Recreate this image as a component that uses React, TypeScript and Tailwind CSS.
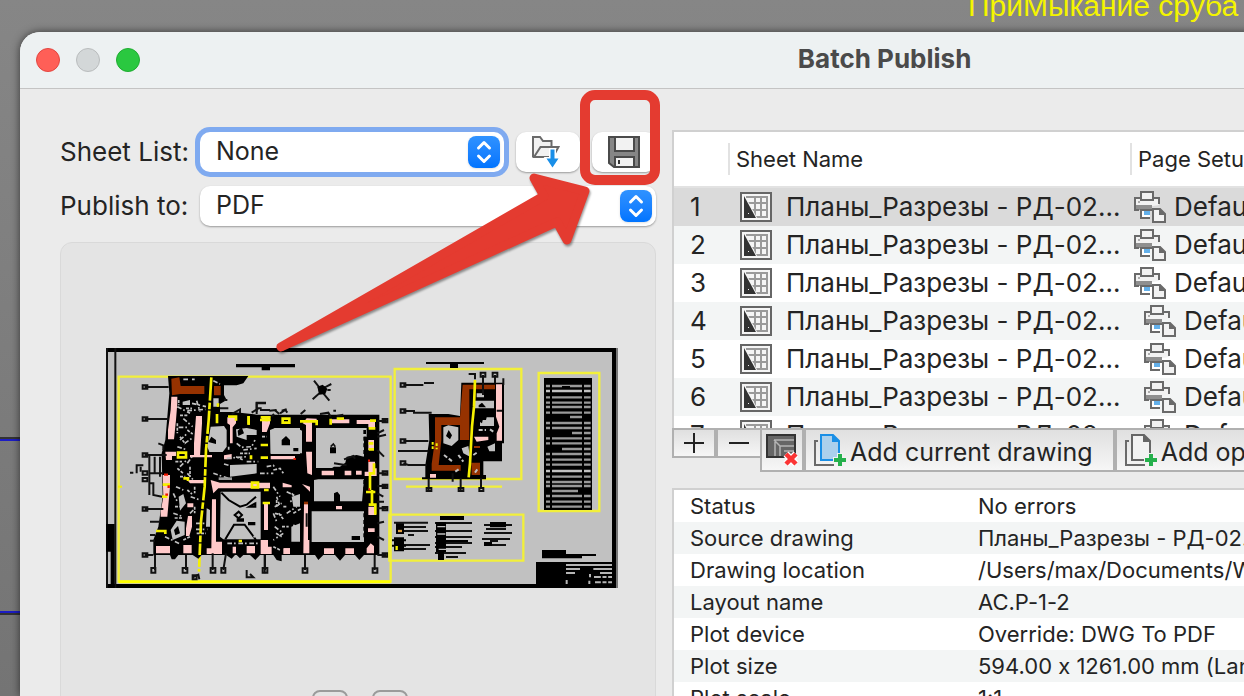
import React from "react";
import clsx from "clsx";

type Sheet = { id: number; nested?: boolean };

const sheets: Sheet[] = [
  { id: 1 },
  { id: 2 },
  { id: 3 },
  { id: 4, nested: true },
  { id: 5, nested: true },
  { id: 6, nested: true },
  { id: 7, nested: true },
];

const details = [
  ["Status", "No errors"],
  ["Source drawing", "Планы_Разрезы - РД-02.dwg"],
  ["Drawing location", "/Users/max/Documents/Work"],
  ["Layout name", "АС.Р-1-2"],
  ["Plot device", "Override: DWG To PDF"],
  ["Plot size", "594.00 x 1261.00 mm (Landscape)"],
  ["Plot scale", "1:1"],
];

function Stepper() {
  return (
    <span className="pointer-events-none absolute inset-y-0 right-1 my-auto flex h-8 w-8 items-center justify-center rounded-lg bg-linear-to-b from-[#2f92ff] to-[#0074ff] shadow-sm">
      <svg width="16" height="24" viewBox="0 0 16 24" fill="none" stroke="white" strokeWidth="3" strokeLinecap="round" strokeLinejoin="round">
        <path d="M2.5 8 8 2.5 13.5 8M2.5 16 8 21.5 13.5 16" />
      </svg>
    </span>
  );
}

function OpenFolderIcon() {
  return (
    <svg width="28" height="32" viewBox="0 0 28 32">
      <path d="M1 21V1H8L11 5H19.5V11" fill="#f2f2f2" stroke="#6a6a6a" strokeWidth="2" />
      <path d="M2 21 8.5 11H26.5L21 21Z" fill="#f2f2f2" stroke="#6a6a6a" strokeWidth="2" />
      <path d="M18.5 13.5H22.5V22.5H26.5L20.5 31.5 14.5 22.5H18.5Z" fill="#1a8fe8" stroke="white" strokeWidth="3" paintOrder="stroke" />
    </svg>
  );
}

function FloppyIcon() {
  return (
    <svg width="32" height="32" viewBox="0 0 32 32" strokeWidth="2">
      <path d="M1 1H31V31H6L1 27Z" fill="#868686" stroke="#4a4a4a" />
      <path d="M7 1V15H26V1Z" fill="#f2f2f2" stroke="#4a4a4a" />
      <path d="M7 31V21H26V31Z" fill="#f2f2f2" stroke="#4a4a4a" />
      <path d="M10 24H12V28H10Z" fill="#333" />
    </svg>
  );
}

function SheetIcon() {
  return (
    <svg width="32" height="30" viewBox="0 0 32 30" className="shrink-0">
      <path d="M1 1H31V29H1Z" fill="#f5f5f5" stroke="#666" strokeWidth="2" />
      <path d="M6 5H28M8 11H28M11 18H28M14 25H28M15 4V26M21 4V26M27 4V26" stroke="#9a9a9a" strokeWidth="2" />
      <path d="M4 4V26H16Z" fill="#333" stroke="#f5f5f5" strokeWidth="2" paintOrder="stroke" />
      <path d="M8 21h1v1H8Z" fill="#eee" />
    </svg>
  );
}

function PrinterIcon() {
  return (
    <svg width="32" height="32" viewBox="0 0 32 32" className="shrink-0">
      <path d="M1 18V7H25V14" fill="#f2f2f2" />
      <path d="M0 14H18V19H0Z" fill="#8f8f8f" />
      <path d="M5 19H1V7H25V13" fill="none" stroke="#6a6a6a" strokeWidth="2" />
      <path d="M4 11H6" stroke="#6a6a6a" strokeWidth="1" />
      <path d="M7 1H19V9H7Z" fill="#f2f2f2" stroke="#6a6a6a" strokeWidth="2" />
      <path d="M7 19H16V27H7Z" fill="white" />
      <path d="M16 27H7V19H18" fill="none" stroke="#6a6a6a" strokeWidth="2" />
      <path d="M10 20H16V24H10Z" fill="#63b0ea" />
      <path d="M19 18H26L31 23V31H19Z" fill="#f2f2f2" stroke="#6a6a6a" strokeWidth="2" />
      <path d="M25 17 32 24H25Z" fill="#6a6a6a" />
    </svg>
  );
}

function RemoveLayoutIcon() {
  return (
    <svg width="32" height="32" viewBox="0 0 32 32">
      <path d="M1 1H29V23H1Z" fill="#666" stroke="#333" strokeWidth="2" />
      <path d="M8 6H28M8 6 14 12H28M14 12V22M9 8V22M18 17H28" fill="none" stroke="#b5b5b5" strokeWidth="1.5" />
      <path d="M20 20 30 30M30 20 20 30" stroke="white" strokeWidth="7" />
      <path d="M20 20 30 30M30 20 20 30" stroke="#fb3434" strokeWidth="4.5" />
    </svg>
  );
}

function AddPageIcon({ current }: { current?: boolean }) {
  const line = current ? "#1a8fe6" : "#666";
  return (
    <svg width="32" height="32" viewBox="0 0 32 32">
      <path d="M4 7H1V31H20" fill="none" stroke="#6a6a6a" strokeWidth="2" />
      <path d="M7 1H19L25 7V26H7Z" fill={current ? "#abd0ec" : "#f2f2f2"} stroke={line} strokeWidth="2" />
      <path d="M18 0 26 8H18Z" fill={line} />
      <path d="M24 20H28V24H32V28H28V32H24V28H20V24H24Z" fill="#25b04c" stroke="#f2f2f2" strokeWidth="2" paintOrder="stroke" />
    </svg>
  );
}

// Thumbnail of the plotted layout, three units to a pixel
function DrawingPreview() {
  return (
    <svg viewBox="18 24 1536 720" className="w-full" fill="none" role="img" aria-label="Layout preview">
      <path d="M18 24H1554V744H18Z" fill="#c1c1c1" />
      <path d="M18 30H1554M18 738H1554M1542 24V744" stroke="#000" strokeWidth="12" />
      <path d="M1551 24V744" stroke="#777" strokeWidth="6" />
      <path d="M21 24V744M46 24V744" stroke="#111" strokeWidth="6" />
      <path d="M18 552H44V635H18ZM32 635H44V744H32Z" fill="#000" />

      {/* left plan */}
      <g>
        <path d="M56 110H872V725H56Z" stroke="#f2f03a" strokeWidth="7" />
        <path d="M56 725H872" stroke="#ffff00" strokeWidth="9" />
        <path d="M408 77H585M485 86H510" stroke="#000" strokeWidth="10" />
        <path d="M204 108H445L430 130 410 136H372V165L380 180 360 192V216H400L470 224H838V645H160V600L175 560 188 470 185 340 196 300 208 160Z" fill="#000" />
        <path d="M214 116 238 112 242 138H313V162H240L216 166ZM342 138H362V166H342Z" fill="#963200" />
        <path d="M214 170H232V190L228 240 222 298H204V270L212 210ZM288 228H306V250L300 348H282V310ZM196 335H228V348H216V360H198ZM188 405H210V440L202 530H182V515L190 470ZM336 478H348V605H366V642H320V625H334ZM492 490H504V570H492ZM486 232H510V250L500 276H486ZM382 232H408V250L398 262V310H390V255L382 250ZM332 420 360 428H510V445H355L340 460ZM548 428 575 436V442H548ZM168 618H210V640H168ZM250 615H275V640H250ZM398 620H408V640H398ZM440 618H465V640H440ZM482 600H504V620H515V642H482ZM552 625H570V642H552ZM262 420H315V430H270ZM372 346 395 342V358H372ZM512 348H585V358H512ZM262 490H280V502H262ZM264 528H276V560L268 588H258V565ZM270 345H336V352H270Z" fill="#ffc9c9" />
        <path d="M332 260 372 258 380 270V320L368 336H328L322 320ZM408 268 440 264 470 270V285H440V300L410 290ZM510 270 525 264H600V342H512ZM362 455H482V598H370L360 590ZM230 542 254 545V585L218 600 212 570ZM390 375 470 372V400L390 410ZM236 470 250 462 258 490 240 512ZM320 505 330 510V560H318ZM340 175H356V200H340ZM248 185 270 180V195H248ZM575 470 600 462V500H580ZM574 560 600 550V605H574Z" fill="#c1c1c1" />
        <path d="M325 306 334 290 348 300V312ZM413 272 425 262 432 280 415 288ZM546 300 558 290 570 300V316H546ZM568 324H594V334H568ZM410 535H432V545H410ZM444 546H466V556H444ZM222 570 234 558 240 580 226 586Z" fill="#000" />
        <path d="M364 458 386 480 420 500 440 494 468 470M376 598 402 554H434L468 600M404 525 416 515 426 525 416 535ZM448 500 466 490V500Z" stroke="#000" strokeWidth="6" />
        <path d="M232 200 270 220M250 236 278 260M236 262H262M254 310 280 292M240 300 262 280M232 320 262 330M276 190 318 200M290 182 300 215M340 400 400 420M372 372 420 385M410 310 425 322 455 320 465 300M430 330 470 325M500 380 520 376 530 390M520 440 540 470M524 500 545 490M520 520 530 545M524 560 550 580 520 600M560 455 590 470 565 490M560 520 590 500M228 440 250 450M220 460 232 485M262 400 280 420M272 470 300 480M288 550H322M288 568H322M220 520 250 530M195 590 240 612M270 520 280 510M440 590H480M382 610H480M250 118H270M276 118H284M340 122 360 132M262 212 316 208M240 380 260 360M262 370 276 350M380 355 440 350M440 365H475M480 400H520" stroke="#c1c1c1" strokeWidth="5" strokeDasharray="14 6 5 8" />
        <path d="M236 180V196M258 205H276M240 226H266M232 250V280M262 270 278 282M240 290 256 312M226 365H246M232 385 250 400M240 410H256M270 380V410M284 440V460M225 500H245M262 450 276 462M284 500V520M290 580H318M224 534H246M250 600 270 590M386 320V330M420 340H450M408 350 430 360M486 290H500M530 480V500M550 500H562M536 520 552 540M546 560H566M520 620 540 630" stroke="#c1c1c1" strokeWidth="5" strokeDasharray="9 4" />
        <path d="M356 416H396" stroke="#999" strokeWidth="8" />
        <path d="M334 112 326 240 318 330 314 440 303 545 297 695" stroke="#f5f000" strokeWidth="8" strokeDasharray="70 6 20 4" />
        <path d="M351 222V250M384 230H408V242M446 228V254M482 232H512M482 315H504M482 353H504M453 346V358M234 338H258V352H234ZM456 428H474V442H456ZM488 489H510M492 450H506M188 434H210M186 470H202M168 573H196V582M250 415H264V423M416 603H426M354 190V200M548 236H568V248H548ZM500 228V244" stroke="#f5f000" strokeWidth="8" />
        <path d="M192 404H204M196 464H204M584 354V360M206 436V444" stroke="#f01800" strokeWidth="7" />
        <path d="M134 141H206M134 237H206M134 345H200M134 507H190M134 645H160M148 345V465M164 350V400M180 350V410M146 400H186M146 430H160V465L186 470M150 585H165M150 602H165M175 310 190 316V330M150 545H180M165 645V690M258 645V690M338 640V690M378 640 370 690M494 645V700M360 205H385M395 222 420 208V220M455 218 475 205H485M470 215V188H498M508 212 530 210M540 220 556 210 562 218M515 230 522 222M372 180H382M90 398H100M110 400V376H130M122 380V395M278 712 295 704 298 718M440 690V712H460L450 702" stroke="#111" strokeWidth="6" />
        <path d="M128 136H142V146H128ZM128 232H142V242H128ZM128 340H142V350H128ZM128 394H142V404H128ZM128 414H142V424H128ZM128 502H142V512H128ZM128 640H142V650H128ZM154 684H166V698H154ZM248 684H262V698H248ZM332 684H346V698H332ZM364 684H376V698H364ZM488 684H502V698H488ZM278 706H290V718H278Z" stroke="#111" strokeWidth="6" />
        <path d="M210 645H235L225 658H215ZM278 645H305L295 656ZM378 645H405L395 656ZM410 645H430L420 655ZM450 645H480L466 660ZM520 645 530 660 545 664V645Z" fill="#000" />
        <path d="M54 440H66" stroke="#f5f000" strokeWidth="6" />
      </g>

      {/* right half of the left plan */}
      <g transform="translate(420 0)">
        <path d="M228 264H380V290H372V350L350 345 320 350 316 368 300 380H282L276 384H228V330ZM92 275 105 264H170L186 272V340H92ZM222 420 235 418H372L366 486H222ZM215 514H372V606H215ZM226 560H372V604H226Z" fill="#c1c1c1" />
        <path d="M222 390H380V410H222ZM160 324H175V334H160ZM125 300 138 288 150 300V316H125ZM336 360H360V372H336ZM335 588H360V600H335ZM270 322H288V340H270ZM282 486V460L292 455 300 465V486Z" fill="#000" />
        <path d="M272 320 280 312 286 320" stroke="#111" strokeWidth="5" />
        <path d="M212 488H380M212 508H380" stroke="#000" strokeWidth="9" />
        <path d="M200 235 230 236V246H216V305H198V255L188 250ZM198 335H216V405L202 400ZM245 392H282V406H245ZM314 392H334V406H314ZM350 240H405V262H385V252H350ZM385 300H402V330H385ZM385 365H405V385H410V408H374V395H385ZM385 500H408V525H385ZM192 490H204V600H208V640H190ZM186 432 210 440V455ZM272 238H328V250H272ZM288 498H306V508H288ZM384 565H404V576H384ZM392 610 402 618V640H380V625ZM252 625H282V642H252ZM316 625H342V642H316ZM348 392H365V404H348ZM130 625H150V642H130Z" fill="#ffc9c9" />
        <path d="M26 228V254M180 244H230V256M272 236V254M290 236H312M390 242H408M386 265H406M386 328H402M402 370V400H390V450M378 456H406M396 450V495M386 494H406V524M386 310H400M60 240H92" stroke="#f5f000" strokeWidth="8" />
        <path d="M384 362H390M386 448H390" stroke="#f01800" strokeWidth="7" />
        <path d="M192 489H204" stroke="#963200" strokeWidth="8" />
        <path d="M222 122 236 140 255 142 274 132M236 140 240 158 218 178M255 145 250 160 268 182M262 150H272" stroke="#111" strokeWidth="6" />
        <path d="M232 140 248 134 262 146 256 162 238 164Z" fill="#000" />
        <path d="M182 222 196 210M240 222 265 218 272 230M280 212H288M290 228 310 224M412 243H440M412 280 432 270M412 290 438 284M412 330 432 350M412 400H440M412 438H440M412 460 430 470M412 485H432M412 505H440M412 550 432 545M412 590 432 600M412 645H440M404 645V690M195 645V690M75 645V690M282 370 320 376M312 358 340 348 345 356M50 222V190H78M60 210H90M104 210 118 222M125 212 140 208M200 520V560" stroke="#111" strokeWidth="6" />
        <path d="M428 237H442V247H428ZM428 394H442V404H428ZM428 434H442V444H428ZM428 501H442V511H428ZM428 640H442V650H428ZM398 685H412V698H398ZM188 685H202V698H188Z" stroke="#111" strokeWidth="6" />
        <path d="M374 270V360M374 420V480M374 520V600" stroke="#000" strokeWidth="8" strokeDasharray="12 8" />
        <path d="M100 390 120 385 130 400M110 470 120 500M105 520 125 525M155 460 175 480 160 490M160 520 185 505M108 580 125 590M160 555 175 565" stroke="#c1c1c1" strokeWidth="5" strokeDasharray="10 6" />
        <path d="M225 645H250L235 660ZM285 645H315L300 662ZM345 645H372L358 660Z" fill="#000" />
      </g>

      <g transform="translate(840 0)">
        {/* upper floor */}
        <path d="M44 87H424V417H44ZM28 524H430V662H28ZM476 99H658V513H476ZM78 440H366" stroke="#f2f03a" strokeWidth="7" />
        <path d="M138 69H312" stroke="#000" strokeWidth="6" />
        <path d="M210 69H234V84H210Z" fill="#000" />
        <path d="M244 128H372V310H366V364H310V405H318V418H126V412H136V375L148 300 146 222H205L240 228Z" fill="#000" />
        <path d="M248 134H345V148H268V300H240V255H184V300L176 375H242V392H155V372L165 300V232H240ZM274 368H300V405H275ZM282 318H300V324H282Z" fill="#963200" />
        <path d="M190 262 205 256 235 262V300L215 318 190 310ZM282 182H342V205H282ZM320 232H342V258H300V240H318ZM290 160H312V172H290ZM245 325 265 318 270 350 250 340ZM322 320 345 310V334H328Z" fill="#c1c1c1" />
        <path d="M348 133H366V302H350V280L358 260 348 230ZM282 290H325V300L290 305ZM150 402H168V413H150Z" fill="#ffc9c9" />
        <path d="M198 288 206 270 216 286 210 298ZM296 196 306 188 318 202H296ZM290 240 310 232 306 250Z" fill="#000" />
        <path d="M192 345 218 365M235 345 250 365M280 345 295 335M226 395 240 385M285 398 292 388M330 268 340 275M296 270H318" stroke="#c1c1c1" strokeWidth="6" strokeDasharray="12 6" />
        <path d="M285 120 282 200 276 260 270 370 266 412" stroke="#f5f000" strokeWidth="8" />
        <path d="M158 306V328M170 310V328" stroke="#f5f000" strokeWidth="6" strokeDasharray="8 5" />
        <path d="M70 135H130M132 129H162M70 213H102V218H155M70 303H145M54 333H145M70 370 85 375H140M146 415V450M242 415V450M303 415V445M309 105V165M345 105V130M285 118V102H266M370 115V135M218 400V425M350 212H366" stroke="#111" strokeWidth="6" />
        <path d="M62 130H76V140H62ZM62 208H76V218H62ZM62 298H76V308H62ZM62 364H76V374H62ZM302 98H316V110H302ZM338 98H352V110H338ZM140 444H154V453H140ZM236 444H250V453H236ZM298 444H310V453H298Z" stroke="#111" strokeWidth="6" />

        {/* specification table */}
        <path d="M492 114H636V510H492Z" fill="#000" />
        <path d="M498 153H632M498 393H632" stroke="#c1c1c1" strokeWidth="8" />
        <path d="M498 138H632M498 172H632M498 188H632M498 201H632M498 218H632M498 249H632M498 264H632M498 295H632M498 310H632M498 342H632M498 359H632M498 374H632M498 410H632M498 426H632M498 438H632M498 468H632M498 485H632M498 500H632" stroke="#999" strokeWidth="7" />
        <path d="M570 231H606M576 279H632M546 327H632M516 453H594" stroke="#999" strokeWidth="7" />
        <path d="M513 114V510M609 114V510" stroke="#000" strokeWidth="6" />
        <path d="M546 138H570V147H546Z" fill="#000" />

        {/* notes */}
        <path d="M42 548H144M72 561H138M72 573H144M84 585H102M66 615H150M66 627H138M165 549H276M165 573H276M165 591H276M165 609H276M165 621H246M165 639H258M198 651H234M312 555H396M318 567H378M312 579H396M306 597H390M318 615H378M330 603H354" stroke="#111" strokeWidth="6" />
        <path d="M48 550H72V582H48ZM42 592H72V634H42ZM36 598H78V604H36ZM36 614H78V620H36ZM180 528H252V540H180ZM168 546H198V636H168ZM174 636H192V660H174ZM330 546H378V562H330ZM312 606H336V618H312ZM198 600H264V606H198Z" fill="#000" />
        <path d="M172 560H196M172 582H196M176 628H200" stroke="#c1c1c1" strokeWidth="4" />
        <path d="M54 573H66" stroke="#e0a040" strokeWidth="7" />
        <path d="M50 618V630" stroke="#f5f000" strokeWidth="7" />

        {/* title block */}
        <path d="M486 630H558V642H648V648H606V655H486ZM468 666H700V734H468Z" fill="#000" />
        <path d="M558 675H696M558 687H600M640 687H696M558 699H585M660 699H696M642 711H696M560 720V732M630 702V712M628 722V732M645 727H696" stroke="#b5b5b5" strokeWidth="6" />
        <path d="M665 702V734M682 702V734" stroke="#000" strokeWidth="5" />
      </g>
    </svg>
  );
}

function Callout() {
  return (
    <svg className="pointer-events-none absolute inset-0 h-full w-full" fill="none">
      <rect x="585" y="95" width="70" height="85" rx="10" stroke="#e43b30" strokeWidth="10" />
      <path
        d="M281 347 544 196 534 178 585 191 567 240 557 222Z"
        fill="#e43b30"
        stroke="#e43b30"
        strokeWidth="9"
        strokeLinejoin="round"
        className="drop-shadow-[1px_2px_1px_rgba(0,0,0,0.4)]"
      />
    </svg>
  );
}

function Backdrop() {
  return (
    <div className="absolute inset-0 bg-linear-to-b from-[#868686] to-[#747474]">
      <svg className="absolute inset-0 h-full w-full" strokeWidth="2">
        <path d="M0 438H20M0 614H20" stroke="#333" />
        <path d="M0 440H20M0 612H20" stroke="#1c1cc4" />
      </svg>
      <p className="absolute -top-3 left-[968px] whitespace-nowrap font-['Liberation_Sans',sans-serif] text-[30px] leading-9 text-[#f4f400]">
        ПриМыкание сруба
      </p>
    </div>
  );
}

function PublishForm() {
  const field =
    "h-10 w-full appearance-none rounded-[10px] bg-white px-4 pb-[2px] text-[25px] leading-8 shadow-[0_1px_2px_rgba(0,0,0,0.35)] outline-none";
  const iconButton =
    "flex h-10 w-16 shrink-0 items-center justify-center rounded-[10px] bg-white shadow-[0_1px_2px_rgba(0,0,0,0.35)]";

  return (
    <section className="flex w-[596px] shrink-0 flex-col pt-[43px]">
      <div className="flex items-center">
        <label htmlFor="sheet-list" className="w-[140px] shrink-0 text-[26px] leading-8">
          Sheet List:
        </label>
        <div className="relative mr-3 flex-1">
          <select id="sheet-list" className={clsx(field, "ring-[5px] ring-[#7faaf0]")}>
            <option>None</option>
          </select>
          <Stepper />
        </div>
        <div className="flex gap-3">
          <button type="button" aria-label="Load sheet list" className={clsx(iconButton, "pr-1")}>
            <OpenFolderIcon />
          </button>
          <button type="button" aria-label="Save sheet list" className={iconButton}>
            <FloppyIcon />
          </button>
        </div>
      </div>

      <div className="mt-[14px] flex items-center">
        <label htmlFor="publish-to" className="w-[140px] shrink-0 text-[26px] leading-8">
          Publish to:
        </label>
        <div className="relative flex-1">
          <select id="publish-to" className={field}>
            <option>PDF</option>
          </select>
          <Stepper />
        </div>
      </div>

      <div className="mt-4 flex-1 rounded-t-xl border border-[#d9d9d9] bg-[#e4e4e4] pt-[105px] pr-[37px] pl-[45px]">
        <DrawingPreview />
        <div className="mt-[102px] flex justify-center gap-6 pr-1">
          <button type="button" aria-label="Previous sheet" className="h-9 w-9 rounded-lg border-2 border-[#9b9b9b]" />
          <button type="button" aria-label="Next sheet" className="h-9 w-9 rounded-lg border-2 border-[#9b9b9b]" />
        </div>
      </div>
    </section>
  );
}

function SheetTable() {
  return (
    <div className="h-[298px] overflow-hidden border-t-2 border-l-2 border-[#d0d0d0] bg-white">
      <table className="w-full table-fixed border-collapse text-left">
        <thead>
          <tr className="h-[55px] border-b-2 border-[#e2e2e2] text-[22px]">
            <th className="w-14 p-0" aria-label="Number">
              <div className="h-8 border-r-2 border-[#e2e2e2]" />
            </th>
            <th className="w-[402px] p-0 font-normal">
              <div className="h-8 border-r-2 border-[#e2e2e2] pl-[6px] leading-8">Sheet Name</div>
            </th>
            <th className="p-0 pl-[6px] font-normal">Page Setup</th>
          </tr>
        </thead>
        <tbody>
          {sheets.map(({ id, nested }) => (
            <tr
              key={id}
              className={clsx("h-[38px] text-[26px] leading-[38px]", id === 1 ? "bg-[#dadada]" : "even:bg-[#f3f5f5]")}
            >
              <td className="p-0 pl-4">{id}</td>
              <td className="p-0 pl-[10px]">
                <div className="flex items-center gap-[14px] whitespace-nowrap">
                  <SheetIcon />
                  Планы_Разрезы - РД-02...
                </div>
              </td>
              <td className={clsx("p-0", nested ? "pl-3" : "pl-[2px]")}>
                <div className="flex items-center gap-2">
                  <PrinterIcon />
                  Default
                </div>
              </td>
            </tr>
          ))}
        </tbody>
      </table>
    </div>
  );
}

function Toolbar() {
  const button = "flex items-center border-2 border-t-0 border-[#b0b0b0] bg-linear-to-b from-[#e0e0e0] to-[#f6f6f6]";

  return (
    <div className="flex h-[60px] items-start border-t-2 border-[#b0b0b0] text-[25px] whitespace-nowrap">
      <button type="button" aria-label="Add sheet" className={clsx(button, "h-7 w-11 justify-center")}>
        <svg width="22" height="22" viewBox="0 0 22 22" stroke="#222" strokeWidth="2">
          <path d="M1 11H21M11 1V21" />
        </svg>
      </button>
      <button type="button" aria-label="Remove sheet" className={clsx(button, "h-7 w-11 justify-center border-r-0")}>
        <svg width="22" height="22" viewBox="0 0 22 22" stroke="#222" strokeWidth="2">
          <path d="M1 11H21" />
        </svg>
      </button>
      <button type="button" aria-label="Remove layouts" className={clsx(button, "h-[42px] w-11 justify-center")}>
        <RemoveLayoutIcon />
      </button>
      <button type="button" className={clsx(button, "h-[42px] gap-1 pr-5 pl-2")}>
        <AddPageIcon current />
        <span className="pt-1 leading-9">Add current drawing</span>
      </button>
      <button type="button" className={clsx(button, "h-[42px] gap-1 pr-5 pl-2")}>
        <AddPageIcon />
        <span className="pt-1 leading-9">Add open drawings</span>
      </button>
    </div>
  );
}

function DetailsTable() {
  return (
    <div className="flex-1 overflow-hidden border-t-2 border-l-2 border-[#d0d0d0] bg-white">
      <table className="w-full table-fixed border-collapse text-left text-[22px] leading-8">
        <tbody>
          {details.map(([name, value]) => (
            <tr key={name} className="h-8 even:bg-[#f3f5f5]">
              <th scope="row" className="w-[304px] p-0 pl-4 font-normal">
                {name}
              </th>
              <td className="p-0 whitespace-nowrap">{value}</td>
            </tr>
          ))}
        </tbody>
      </table>
    </div>
  );
}

export default function App() {
  return (
    <main className="relative h-screen overflow-hidden pt-8 pl-5 font-[Inter,'Noto_Sans',sans-serif] text-[#242424] [font-feature-settings:'calt'_0]">
      <Backdrop />
      {/* the dialog is wider than the viewport and runs off its right edge */}
      <div className="relative flex h-full w-[139vw] flex-col overflow-hidden rounded-tl-[20px] bg-[#ebebeb] shadow-[0_0_8px_rgba(0,0,0,0.6)]">
        <header className="grid h-[57px] shrink-0 grid-cols-[1fr_auto_1fr] items-center border-b border-[#c4c4c4] bg-[#edf1f2] px-4">
          <div className="flex gap-4">
            <button type="button" aria-label="Close" className="h-6 w-6 rounded-full border border-[#e24640] bg-[#ff5f57]" />
            <button type="button" aria-label="Minimize" disabled className="h-6 w-6 rounded-full border border-[#b9bcbd] bg-[#d3d7d8]" />
            <button type="button" aria-label="Zoom" className="h-6 w-6 rounded-full border border-[#1fac31] bg-[#2ac840]" />
          </div>
          <h1 className="pb-[2px] text-[26px] leading-8 font-bold text-[#4a4a4a]">Batch Publish</h1>
        </header>
        <div className="flex min-h-0 flex-1 gap-4 pl-10">
          <PublishForm />
          <section className="flex min-w-0 flex-1 flex-col pt-[41px]">
            <SheetTable />
            <Toolbar />
            <DetailsTable />
          </section>
        </div>
      </div>
      <Callout />
    </main>
  );
}
